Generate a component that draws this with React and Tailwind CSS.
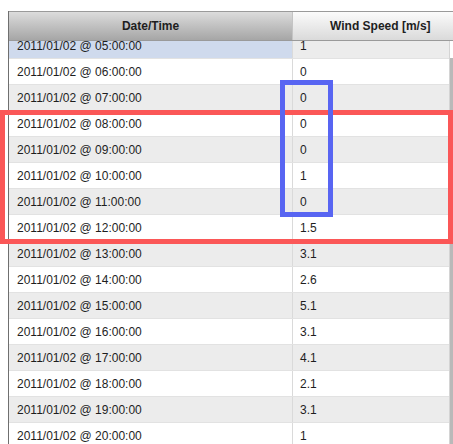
import React from "react";

const rows = [
  { t: "05:00:00", v: "1", selected: true },
  { t: "06:00:00", v: "0" },
  { t: "07:00:00", v: "0" },
  { t: "08:00:00", v: "0" },
  { t: "09:00:00", v: "0" },
  { t: "10:00:00", v: "1" },
  { t: "11:00:00", v: "0" },
  { t: "12:00:00", v: "1.5" },
  { t: "13:00:00", v: "3.1" },
  { t: "14:00:00", v: "2.6" },
  { t: "15:00:00", v: "5.1" },
  { t: "16:00:00", v: "3.1" },
  { t: "17:00:00", v: "4.1" },
  { t: "18:00:00", v: "2.1" },
  { t: "19:00:00", v: "3.1" },
  { t: "20:00:00", v: "1" },
];

const App = () => {
  return (
    <div
      className="relative w-[453px] h-[444px] overflow-hidden bg-white pt-[11px] pl-[8px] text-[12px] text-[#1e1e1e]"
      style={{ fontFamily: '"Liberation Sans", Arial, sans-serif' }}
    >
      <div className="flex flex-col w-[460px] border-l border-[#6f6f6f]">
        {/* header */}
        <div className="flex h-[30px] border-t border-b border-[#9a9a9a] font-bold">
          <div className="w-[284px] flex items-center justify-center bg-gradient-to-b from-[#dcdcdc] to-[#a6a6a6] border-r border-[#c4c4c4]">
            Date/Time
          </div>
          <div className="flex-1 flex items-center pl-[37px] bg-gradient-to-b from-[#fbfbfb] to-[#dadada]">
            Wind Speed [m/s]
          </div>
        </div>

        {/* body */}
        <div className="flex h-[403px] overflow-hidden">
          <div className="w-[441px] -mt-[8px] border-r border-[#d4d4d4]">
            {rows.map((r, i) => {
              const gray = i % 2 === 0;
              return (
                <div
                  key={r.t}
                  className={
                    "flex h-[26px] items-center border-b border-[#e2e2e2] " +
                    (gray ? "bg-[#ececec]" : "bg-white")
                  }
                >
                  <div
                    className={
                      "w-[284px] h-full flex items-center pl-[8px] border-r border-[#dadada] " +
                      (r.selected ? "bg-[#cfdaed]" : "")
                    }
                  >
                    2011/01/02 @ {r.t}
                  </div>
                  <div className="flex-1 pl-[7px]">{r.v}</div>
                </div>
              );
            })}
          </div>
          <div className="flex-1 flex flex-col pt-[17px]">
            <div className="flex-1 bg-[#b9b9b9]"></div>
          </div>
        </div>
      </div>

      {/* annotation overlays */}
      <div className="absolute left-0 top-[110px] w-[453px] h-[134px] border-[5px] border-[#fb5757]"></div>
      <div className="absolute left-[280px] top-[80px] w-[53px] h-[137px] border-[5px] border-[#5865f2]"></div>
    </div>
  );
};

export default App;
